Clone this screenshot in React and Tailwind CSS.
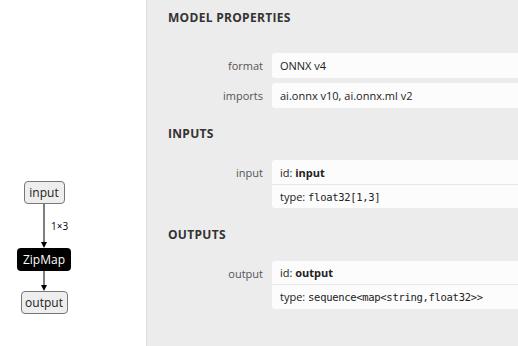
import React from "react";

const sans = { fontFamily: '"Open Sans", "Noto Sans", sans-serif' };
const mono = { fontFamily: '"DejaVu Sans Mono", monospace' };

function Arrow({ height, label }) {
  return (
    <div className="relative flex flex-col items-center" style={{ height }}>
      <svg width="10" height={height} viewBox={`0 0 10 ${height}`}>
        <line x1="5" y1="0" x2="5" y2={height - 5} stroke="#000" strokeWidth="1" />
        <path d={`M2 ${height - 6} L5 ${height} L8 ${height - 6} Z`} fill="#000" />
      </svg>
      {label && (
        <span className="absolute left-[12px] top-[15px] text-[10px] text-black whitespace-nowrap">{label}</span>
      )}
    </div>
  );
}

function Graph() {
  return (
    <div className="flex flex-col items-center w-[88px] pt-[181px] text-[12px]" style={sans}>
      <div className="h-[23px] w-[41px] flex items-center justify-center rounded-[4px] border border-[#777] bg-[#eee] text-[#222]">
        input
      </div>
      <Arrow height={44} label="1×3" />
      <div className="h-[23px] w-[54px] flex items-center justify-center rounded-[4px] bg-black text-white">
        ZipMap
      </div>
      <Arrow height={20} />
      <div className="h-[23px] w-[47px] flex items-center justify-center rounded-[4px] border border-[#777] bg-[#eee] text-[#222]">
        output
      </div>
    </div>
  );
}

function Heading({ children, className }) {
  return <div className={`pl-[21px] text-[12px] font-bold text-[#333] tracking-[0.3px] ${className}`}>{children}</div>;
}

function Row({ label, children, className = "" }) {
  return (
    <div className={`flex ${className}`}>
      <div className="w-[116px] shrink-0 text-right text-[11px] text-[#555] h-[25px] leading-[25px]">{label}</div>
      <div className="ml-[9px] flex-1 bg-[#fcfcfc] rounded-l-[3px] text-[11px] text-[#222]">{children}</div>
    </div>
  );
}

export default function App() {
  return (
    <div className="flex h-[346px] w-[518px] overflow-hidden" style={sans}>
      <div className="w-[147px] shrink-0 bg-white border-r border-[#ddd]">
        <Graph />
      </div>
      <div className="flex-1 bg-[#ececec] flex flex-col">
        <Heading className="pt-[9px] h-[28px]">MODEL PROPERTIES</Heading>
        <Row label="format" className="mt-[25px]">
          <div className="h-[25px] leading-[25px] pl-[8px]">ONNX v4</div>
        </Row>
        <Row label="imports" className="mt-[5px]">
          <div className="h-[25px] leading-[25px] pl-[8px]">ai.onnx v10, ai.onnx.ml v2</div>
        </Row>
        <Heading className="mt-[17px] h-[18px]">INPUTS</Heading>
        <Row label="input" className="mt-[17px]">
          <div className="h-[25px] leading-[25px] pl-[8px] border-b border-[#e6e6e6]">
            id: <span className="font-bold">input</span>
          </div>
          <div className="h-[23px] leading-[23px] pl-[8px]">
            type: <span className="text-[10.5px] tracking-[-0.3px]" style={mono}>float32[1,3]</span>
          </div>
        </Row>
        <Heading className="mt-[18px] h-[18px]">OUTPUTS</Heading>
        <Row label="output" className="mt-[17px]">
          <div className="h-[24px] leading-[24px] pl-[8px] border-b border-[#e6e6e6]">
            id: <span className="font-bold">output</span>
          </div>
          <div className="h-[24px] leading-[24px] pl-[8px]">
            type: <span className="text-[10.5px] tracking-[-0.3px]" style={mono}>sequence&lt;map&lt;string,float32&gt;&gt;</span>
          </div>
        </Row>
      </div>
    </div>
  );
}
